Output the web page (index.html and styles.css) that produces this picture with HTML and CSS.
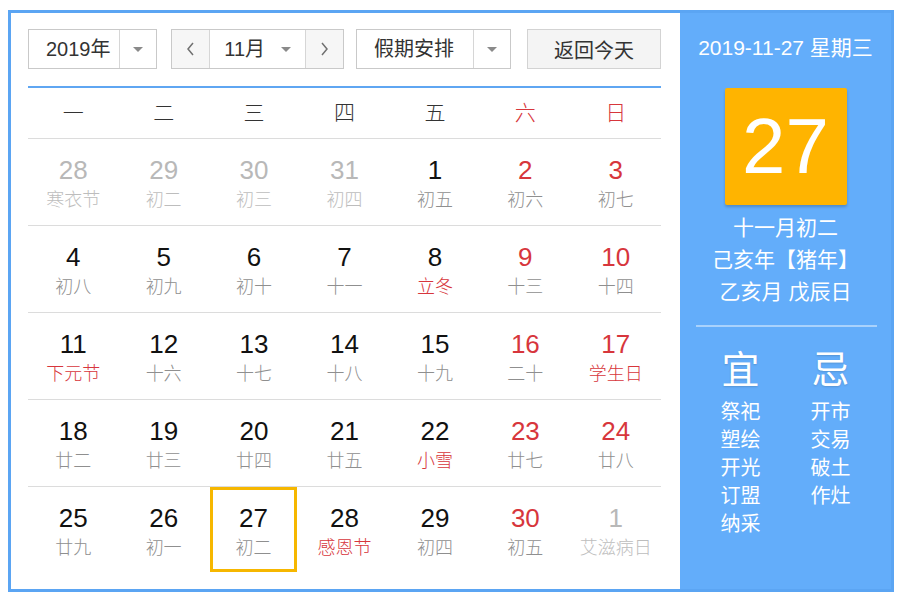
FILE: index.html
```html
<!DOCTYPE html>
<html lang="zh-CN">
<head>
    <meta charset="UTF-8">
    <meta name="viewport" content="width=device-width, initial-scale=1.0">
    <title>万年历</title>
    <link rel="stylesheet" href="styles.css">
</head>
<body>

    <div class="calendar">
        <div class="main">
            <!-- toolbar: year / month / holidays / today -->
            <div class="toolbar">
                <div class="select year-select">
                    <span class="select-text">2019年</span>
                    <span class="select-caret"><i class="caret"></i></span>
                </div>

                <div class="month-group">
                    <span class="arrow-btn">
                        <svg width="9" height="14" viewBox="0 0 9 14"><polyline points="7,1 2,7 7,13" /></svg>
                    </span>
                    <span class="month-text">11月 <i class="caret"></i></span>
                    <span class="arrow-btn">
                        <svg width="9" height="14" viewBox="0 0 9 14"><polyline points="2,1 7,7 2,13" /></svg>
                    </span>
                </div>

                <div class="select holiday-select">
                    <span class="select-text">假期安排</span>
                    <span class="select-caret"><i class="caret"></i></span>
                </div>

                <button class="today-btn">返回今天</button>
            </div>

            <div class="weekdays">
                <span>一</span>
                <span>二</span>
                <span>三</span>
                <span>四</span>
                <span>五</span>
                <span class="red">六</span>
                <span class="red">日</span>
            </div>

            <div class="week">
                <div class="day other"><b>28</b><em>寒衣节</em></div>
                <div class="day other"><b>29</b><em>初二</em></div>
                <div class="day other"><b>30</b><em>初三</em></div>
                <div class="day other"><b>31</b><em>初四</em></div>
                <div class="day"><b>1</b><em>初五</em></div>
                <div class="day weekend"><b>2</b><em>初六</em></div>
                <div class="day weekend"><b>3</b><em>初七</em></div>
            </div>

            <div class="week">
                <div class="day"><b>4</b><em>初八</em></div>
                <div class="day"><b>5</b><em>初九</em></div>
                <div class="day"><b>6</b><em>初十</em></div>
                <div class="day"><b>7</b><em>十一</em></div>
                <div class="day"><b>8</b><em class="fest">立冬</em></div>
                <div class="day weekend"><b>9</b><em>十三</em></div>
                <div class="day weekend"><b>10</b><em>十四</em></div>
            </div>

            <div class="week">
                <div class="day"><b>11</b><em class="fest">下元节</em></div>
                <div class="day"><b>12</b><em>十六</em></div>
                <div class="day"><b>13</b><em>十七</em></div>
                <div class="day"><b>14</b><em>十八</em></div>
                <div class="day"><b>15</b><em>十九</em></div>
                <div class="day weekend"><b>16</b><em>二十</em></div>
                <div class="day weekend"><b>17</b><em class="fest">学生日</em></div>
            </div>

            <div class="week">
                <div class="day"><b>18</b><em>廿二</em></div>
                <div class="day"><b>19</b><em>廿三</em></div>
                <div class="day"><b>20</b><em>廿四</em></div>
                <div class="day"><b>21</b><em>廿五</em></div>
                <div class="day"><b>22</b><em class="fest">小雪</em></div>
                <div class="day weekend"><b>23</b><em>廿七</em></div>
                <div class="day weekend"><b>24</b><em>廿八</em></div>
            </div>

            <div class="week">
                <div class="day"><b>25</b><em>廿九</em></div>
                <div class="day"><b>26</b><em>初一</em></div>
                <div class="day today"><b>27</b><em>初二</em></div>
                <div class="day"><b>28</b><em class="fest">感恩节</em></div>
                <div class="day"><b>29</b><em>初四</em></div>
                <div class="day weekend"><b>30</b><em>初五</em></div>
                <div class="day other"><b>1</b><em>艾滋病日</em></div>
            </div>
        </div>

        <!-- selected day details -->
        <div class="side">
            <div class="side-date">2019-11-27 星期三</div>
            <div class="big-day">27</div>
            <div class="lunar-info">
                <p>十一月初二</p>
                <p>己亥年【猪年】</p>
                <p>乙亥月 戊辰日</p>
            </div>
            <div class="side-line"></div>
            <div class="almanac">
                <div class="almanac-col">
                    <h3>宜</h3>
                    <p>祭祀</p>
                    <p>塑绘</p>
                    <p>开光</p>
                    <p>订盟</p>
                    <p>纳采</p>
                </div>
                <div class="almanac-col">
                    <h3>忌</h3>
                    <p>开市</p>
                    <p>交易</p>
                    <p>破土</p>
                    <p>作灶</p>
                </div>
            </div>
        </div>
    </div>

</body>
</html>
```

FILE: styles.css
```css
body {
    margin: 0;
    background-color: #fff;
    font-family: "Liberation Sans", "Noto Sans CJK SC", sans-serif;
    color: #333;
}

.calendar {
    display: flex;
    width: 880px;
    height: 576px;
    margin: 10px 0 0 8px;
    border: 3px solid #5ba5f3;
    background-color: #fff;
}

/* left part: toolbar + month grid */

.main {
    flex: 1;
    padding: 16px 19px 0 17px;
}

.toolbar {
    display: flex;
    height: 40px;
}

.select {
    display: flex;
    border: 1px solid #c9c9c9;
    box-sizing: border-box;
    font-size: 20px;
    line-height: 38px;
}

.year-select {
    width: 129px;
    margin-right: 14px;
}

.holiday-select {
    width: 155px;
    margin-right: 16px;
}

.select-text {
    flex: 1;
    padding-left: 17px;
}

.select-caret {
    width: 36px;
    border-left: 1px solid #d6d6d6;
    display: flex;
    align-items: center;
    justify-content: center;
}

.caret {
    display: inline-block;
    width: 0;
    height: 0;
    border-left: 5px solid transparent;
    border-right: 5px solid transparent;
    border-top: 5px solid #8a8a8a;
    vertical-align: middle;
}

.month-group {
    display: flex;
    width: 173px;
    margin-right: 12px;
    border: 1px solid #c9c9c9;
    box-sizing: border-box;
    font-size: 20px;
    line-height: 38px;
}

.arrow-btn {
    width: 37px;
    background-color: #f6f6f6;
    display: flex;
    align-items: center;
    justify-content: center;
}

.arrow-btn svg polyline {
    fill: none;
    stroke: #707070;
    stroke-width: 1.5;
}

.month-text {
    flex: 1;
    text-align: center;
    border-left: 1px solid #d6d6d6;
    border-right: 1px solid #d6d6d6;
}

.month-text .caret {
    margin-left: 10px;
    margin-top: -3px;
}

.today-btn {
    width: 134px;
    padding: 0;
    border: 1px solid #d3d3d3;
    background-color: #f4f4f4;
    color: #333;
    font-family: inherit;
    font-size: 20px;
}

.weekdays {
    display: grid;
    grid-template-columns: repeat(7, 1fr);
    margin-top: 17px;
    height: 50px;
    border-top: 2px solid #5fa6f2;
    font-size: 21px;
    font-weight: 300;
    line-height: 50px;
    text-align: center;
}

.weekdays .red {
    color: #d7363c;
}

.week {
    display: grid;
    grid-template-columns: repeat(7, 1fr);
    height: 86px;
    border-top: 1px solid #dcdcdc;
}

.day {
    text-align: center;
    padding-top: 16px;
    box-sizing: border-box;
}

.day b {
    display: block;
    font-weight: normal;
    font-size: 26px;
    line-height: 30px;
    color: #111;
}

.day em {
    display: block;
    font-style: normal;
    font-weight: 300;
    font-size: 18px;
    line-height: 22px;
    margin-top: 4px;
    color: #8f8f8f;
    white-space: nowrap;
}

.day.weekend b {
    color: #d7363c;
}

.day em.fest {
    color: #d7363c;
}

.day.other b {
    color: #b8b8b8;
}

.day.other em {
    color: #bdbdbd;
}

.day.today {
    border: 3px solid #f6b700;
    margin: 0 2px 1px 1px;
    padding-top: 13px;
}

/* right part: details of the selected day */

.side {
    width: 211px;
    background-color: #63adfa;
    color: #fff;
    text-align: center;
    padding-top: 23px;
}

.side-date {
    font-size: 21px;
    line-height: 24px;
}

.big-day {
    width: 122px;
    height: 117px;
    margin: 28px auto 0;
    background-color: #ffb400;
    border-radius: 2px;
    box-shadow: 0 2px 3px rgba(0, 0, 0, 0.2);
    font-size: 78px;
    line-height: 117px;
}

.lunar-info {
    margin-top: 7px;
}

.lunar-info p {
    margin: 0;
    font-size: 21px;
    line-height: 32px;
}

.side-line {
    height: 2px;
    margin: 17px 14px 0 16px;
    background-color: rgba(255, 255, 255, 0.45);
}

.almanac {
    display: flex;
    justify-content: center;
    gap: 30px;
    margin-top: 21px;
}

.almanac-col {
    width: 60px;
}

.almanac-col h3 {
    margin: 0 0 6px;
    font-weight: normal;
    font-size: 38px;
    line-height: 44px;
    text-shadow: 0 1px 2px rgba(0, 0, 0, 0.15);
}

.almanac-col p {
    margin: 0;
    font-size: 20px;
    line-height: 28px;
}
```
